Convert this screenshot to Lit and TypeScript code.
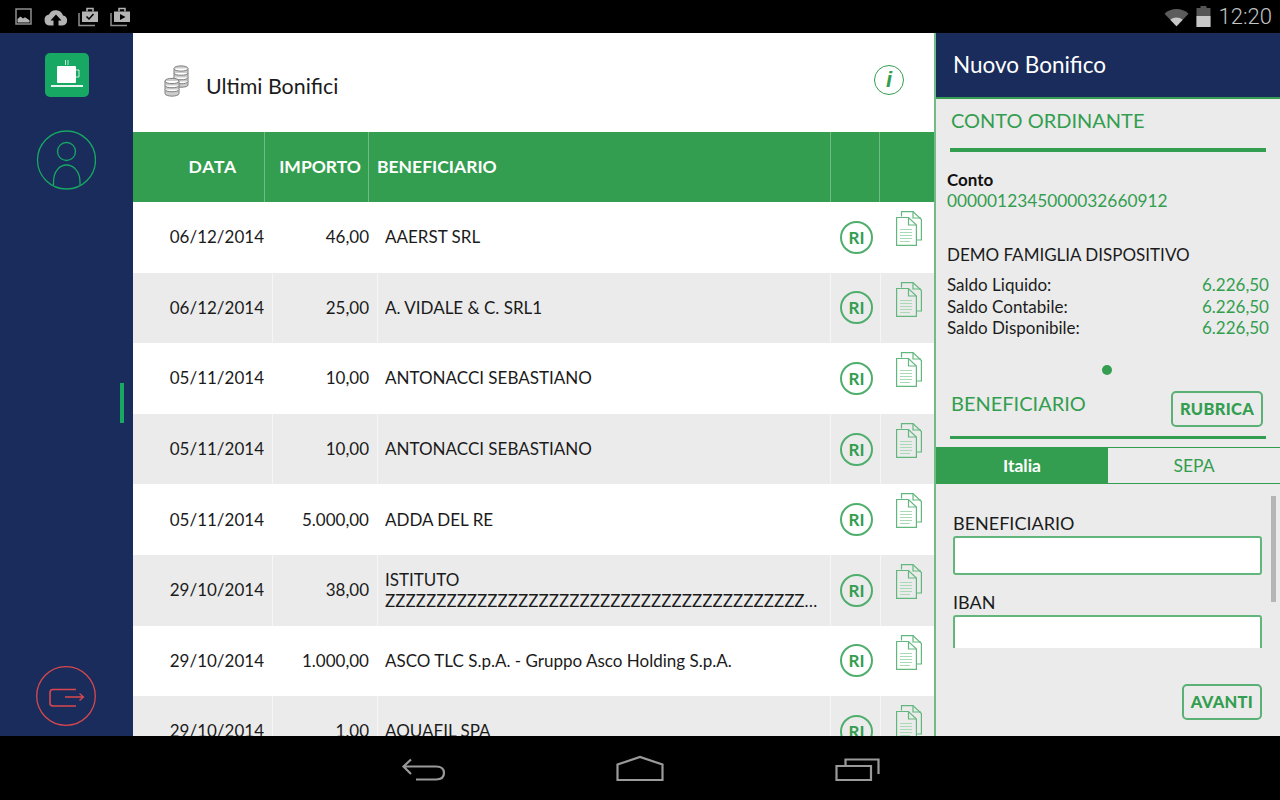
import { LitElement, html, css } from "lit";
import { customElement } from "lit/decorators.js";

const rows: [string, string, string][] = [
  ["06/12/2014", "46,00", "AAERST SRL"],
  ["06/12/2014", "25,00", "A. VIDALE & C. SRL1"],
  ["05/11/2014", "10,00", "ANTONACCI SEBASTIANO"],
  ["05/11/2014", "10,00", "ANTONACCI SEBASTIANO"],
  ["05/11/2014", "5.000,00", "ADDA DEL RE"],
  ["29/10/2014", "38,00", "ISTITUTO ZZZZZZZZZZZZZZZZZZZZZZZZZZZZZZZZZZZZZZZZZZZZZZZZZ"],
  ["29/10/2014", "1.000,00", "ASCO TLC S.p.A. - Gruppo Asco Holding S.p.A."],
  ["29/10/2014", "1,00", "AQUAFIL SPA"],
];

const docIcon = html`<svg class="doc" width="26" height="35" viewBox="0 0 26 35" fill="none" stroke="#62b77e" stroke-width="1.200">
  <path d="M5.500 5.500V.6H17L25.400 8.500V29H20.500" />
  <path d="M17 .6V7H25" />
  <path d="M.6 6.500H12.500L20.400 14V34.400H.6Z" />
  <path d="M12.500 6.500V14H20" />
  <path d="M4 18.500H16M4 21.500H16M4 24.500H16M4 27.500H16M4 30.500H14" stroke="#a9d9b7" />
</svg>`;

@customElement("app-root")
export class AppRoot extends LitElement {
  static styles = css`
    :host { display: block; width: 1280px; height: 800px; overflow: hidden; font-family: Lato, "Open Sans", sans-serif; color: #1b1b1b; background: #000; }
    .screen { display: flex; flex-direction: column; width: 1280px; height: 800px; }
    .status { height: 33px; flex: none; background: #000; display: flex; align-items: center; justify-content: space-between; padding: 0 8px 0 15px; color: #b4b4b4; }
    .status-left { display: flex; align-items: center; }
    .st-cloud { margin-left: 12px; margin-top: 1px; }
    .st-c1 { margin-left: 10px; }
    .st-c2 { margin-left: 11px; }
    .status-right { display: flex; align-items: center; gap: 7px; }
    .clock { font-family: Roboto, sans-serif; font-size: 22px; font-weight: 300; color: #c4c4c4; margin-left: 1px; }
    .body { flex: 1; min-height: 0; display: flex; }
    .side { width: 133px; flex: none; background: #1a2c5b; position: relative; display: flex; flex-direction: column; align-items: center; }
    .logo { margin: 20px 0 0 0; width: 44px; height: 44px; border-radius: 5px; background: #17a864; display: flex; align-items: center; justify-content: center; }
    .avatar { margin: 33px 0 0 -1px; display: block; }
    .logout { margin: auto 0 10px -1px; display: block; }
    .marker { position: absolute; left: 120px; top: 350px; width: 4px; height: 40px; background: #17a864; }
    .main { width: 801px; flex: none; background: #fff; display: flex; flex-direction: column; overflow: hidden; }
    .head { height: 99px; flex: none; display: flex; align-items: center; padding: 0 30px 0 31px; }
    .coins { margin-top: -3px; }
    .head h1 { margin: 6px 0 0 16px; font-size: 21.400px; font-weight: 400; color: #1b1b1b; flex: 1; }
    .info { width: 30px; height: 30px; box-sizing: border-box; border: 1px solid #339e4f; border-radius: 50%; color: #339e4f; font: italic 700 22px/28px "Liberation Sans", sans-serif; text-align: center; margin-top: -6px; }
    .thead { height: 70px; flex: none; display: grid; grid-template-columns: 132px 104px 462px 49px 54px; background: #339e4f; color: #fff; font-size: 17.500px; font-weight: 700; }
    .thead > div { display: flex; align-items: center; border-right: 1px solid #6fbb83; box-sizing: border-box; padding-bottom: 2px; }
    .thead > div:last-child { border-right: none; }
    .th-data { justify-content: flex-end; padding-right: 27px; letter-spacing: .8px; }
    .th-imp { justify-content: flex-end; padding-right: 7px; }
    .th-ben { padding-left: 8px; }
    .tr { height: 70.600px; flex: none; display: grid; grid-template-columns: 140px 105px 453px 50px 53px; align-items: stretch; font-size: 17px; background: #fff; }
    .tr.alt { background: #ebebeb; }
    .tr > div { display: flex; align-items: center; min-width: 0; box-sizing: border-box; padding-bottom: 1px; border-right: 1px solid rgba(255, 255, 255, .55); }
    .tr > div:last-child { border-right: none; }
    .td-date { justify-content: flex-end; padding-right: 8px; }
    .td-amt { justify-content: flex-end; padding-right: 8px; }
    .tr .td-ben { padding-left: 7px; padding-right: 8px; }
    .ben { line-height: 21px; width: 100%; display: -webkit-box; -webkit-box-orient: vertical; -webkit-line-clamp: 2; overflow: hidden; word-break: break-word; }
    .tr .td-ri { padding-left: 9px; }
    .ri { width: 33px; height: 33px; box-sizing: border-box; margin-top: 1px; border: 2px solid #4fae6b; border-radius: 50%; color: #339e4f; font-weight: 700; font-size: 17px; display: flex; align-items: center; justify-content: center; }
    .tr .td-doc { padding-left: 15px; align-items: flex-start; padding-top: 9px; }
    .doc { display: block; }
    .panel { flex: 1; min-width: 0; background: #ebebeb; border-left: 2px solid #72bb87; display: flex; flex-direction: column; box-sizing: border-box; position: relative; }
    .p-title { height: 66px; flex: none; box-sizing: border-box; background: #1a2c5b; border-bottom: 2px solid #339e4f; color: #fff; font-size: 22.500px; display: flex; align-items: center; padding: 0 0 2px 17px; }
    .sec { color: #339e4f; font-size: 20px; line-height: 24px; }
    .conto-h { padding: 9px 0 0 15px; }
    .rule { height: 4px; background: #339e4f; margin-left: 14px; width: 316px; }
    .rule.r1 { margin-top: 16px; }
    .info-block { padding: 17px 11px 0 11px; font-size: 17px; line-height: 21px; }
    .conto { font-weight: 700; color: #111; }
    .iban { color: #339e4f; font-size: 17.300px; }
    .holder { margin-top: 33px; }
    .saldo { display: flex; justify-content: space-between; line-height: 21.500px; }
    .saldo span:last-child { color: #339e4f; }
    .saldi { margin-top: 9px; }
    .dot { width: 10px; height: 10px; background: #339e4f; border-radius: 50%; margin: 26px 0 0 166px; }
    .ben-h { display: flex; align-items: flex-start; justify-content: space-between; padding: 16px 17px 0 15px; height: 60px; box-sizing: border-box; }
    .btn { box-sizing: border-box; border: 2px solid #5bb075; border-radius: 5px; color: #339e4f; font-weight: 900; font-size: 16.500px; display: flex; align-items: center; justify-content: center; letter-spacing: .3px; background: transparent; padding: 0; font-family: inherit; }
    .rub { width: 92px; height: 36px; }
    .rule.r2 { height: 3px; margin-top: 1px; }
    .tabs { display: grid; grid-template-columns: 172px 1fr; height: 37px; margin-top: 8px; border-top: 1px solid #339e4f; border-bottom: 1px solid #339e4f; box-sizing: border-box; font-size: 17.500px; text-align: center; }
    .tab { display: flex; align-items: center; justify-content: center; color: #339e4f; }
    .tab.on { background: #339e4f; color: #fff; font-weight: 700; }
    .form { height: 164px; overflow: hidden; padding: 29px 18px 0 17px; box-sizing: border-box; position: relative; flex: none; }
    .form label { display: block; font-size: 18px; line-height: 20px; color: #1b1b1b; }
    .inp { height: 39px; box-sizing: border-box; background: #fff; border: 2px solid #63b67b; border-radius: 3px; margin-top: 3px; margin-bottom: 17.500px; }
    .scroll { position: absolute; right: 4px; top: 12px; width: 5px; height: 106px; background: #b5b5b5; }
    .foot { flex: 1; display: flex; justify-content: flex-end; padding: 36px 18px 0 0; }
    .av { width: 80px; height: 36px; }
    .nav { height: 64px; flex: none; background: #000; display: flex; align-items: flex-start; justify-content: center; }
    .nav svg { display: block; }
  `;

  render() {
    return html`<div class="screen">
      <div class="status">
        <div class="status-left">
          <svg width="17" height="17" viewBox="0 0 17 17" fill="none"><rect x="1" y="1" width="15" height="15" stroke="#8f8f8f" stroke-width="1.500"/><path d="M2.500 14.500V11l3-2.500 2.500 2 2-1.200 4.500 3v2.200Z" fill="#b4b4b4"/></svg>
          <svg class="st-cloud" width="24" height="17" viewBox="0 0 24 17"><path d="M6 16.500A5.500 5.500 0 0 1 5 5.600 7.500 7.500 0 0 1 19 6.600 5 5 0 0 1 18.500 16.500H14.500V11.500H17.500L12 5.500 6.500 11.500H9.500V16.500Z" fill="#b4b4b4"/></svg>
          <svg class="st-c1" width="21" height="20" viewBox="0 0 21 20" fill="none"><path d="M1 6v12.500h16" stroke="#8f8f8f" stroke-width="1.500"/><path d="M4 4.500h16V15H4Z" fill="#b4b4b4"/><path d="M9 4.500V1.500h6V4.500" stroke="#b4b4b4" stroke-width="1.500"/><path d="M8.500 9.500l2.500 2.500 4.500-5" stroke="#000" stroke-width="1.500"/></svg>
          <svg class="st-c2" width="21" height="20" viewBox="0 0 21 20" fill="none"><path d="M1 6v12.500h16" stroke="#8f8f8f" stroke-width="1.500"/><path d="M4 4.500h16V15H4Z" fill="#b4b4b4"/><path d="M9 4.500V1.500h6V4.500" stroke="#b4b4b4" stroke-width="1.500"/><path d="M10 7l5.500 3L10 13Z" fill="#000"/></svg>
        </div>
        <div class="status-right">
          <svg width="25" height="20" viewBox="0 0 26 20"><path d="M0.500 6.500A19 19 0 0 1 25.500 6.500L13 19.500Z" fill="#5c5c5c"/><path d="M6.500 12.800A10 10 0 0 1 19.500 12.800L13 19.500Z" fill="#c8c8c8"/></svg>
          <svg width="15" height="21" viewBox="0 0 15 21"><path d="M4.500 0h6v2h4v19H.5V2h4Z" fill="#555"/><rect x=".5" y="10" width="14" height="11" fill="#c8c8c8"/></svg>
          <span class="clock">12:20</span>
        </div>
      </div>
      <div class="body">
        <div class="side">
          <div class="logo">
            <svg width="34" height="34" viewBox="0 0 34 34" fill="none">
              <path d="M15.500 2v5M18 2v5" stroke="#bfe6d2" stroke-width="1"/>
              <rect x="7" y="8" width="19" height="17" rx="1" fill="#fff"/>
              <path d="M26 12h3v7h-3" stroke="#cdeedd" stroke-width="1"/>
              <path d="M1 28h32" stroke="#fff" stroke-width="1.800"/>
            </svg>
          </div>
          <svg class="avatar" width="60" height="60" viewBox="0 0 60 60" fill="none" stroke="#17a864" stroke-width="1.300">
            <circle cx="30.500" cy="30" r="29"/>
            <circle cx="30.500" cy="21.500" r="9"/>
            <path d="M17.500 55V52C17.500 41 24 35 30.500 35S44 41 44 52V55"/>
          </svg>
          <svg class="logout" width="60" height="60" viewBox="0 0 60 60" fill="none" stroke="#d9484e" stroke-width="1.300">
            <circle cx="30" cy="30" r="29.300"/>
            <path d="M40 23.500H17Q14 23.500 14 26.500V37Q14 40 17 40H40" stroke-width="1.600"/>
            <path d="M29 31H47.500M43.500 27.500L47.500 31 43.500 34.500" stroke-width="1.300"/>
          </svg>
          <div class="marker"></div>
        </div>
        <div class="main">
          <div class="head">
            <svg class="coins" width="26" height="34" viewBox="0 0 26 34" fill="#fff" stroke="#808080" stroke-width="1">
              <path d="M10 4.500C10 1 24 1 24 4.500V21C24 24 10 24 10 21Z" fill="#ccc"/>
              <path d="M10 4.500C10 8 24 8 24 4.500M10 9C10 12 24 12 24 9M10 13.500C10 16.500 24 16.500 24 13.500M10 17.500C10 20.500 24 20.500 24 17.500"/>
              <path d="M1 17C1 13.500 15 13.500 15 17V29.500C15 33 1 33 1 29.500Z" fill="#ccc"/>
              <path d="M1 17C1 20.500 15 20.500 15 17M1 21.500C1 24.500 15 24.500 15 21.500M1 25.500C1 28.500 15 28.500 15 25.500" />
            </svg>
            <h1>Ultimi Bonifici</h1>
            <div class="info">i</div>
          </div>
          <div class="thead">
            <div class="th-data">DATA</div>
            <div class="th-imp">IMPORTO</div>
            <div class="th-ben">BENEFICIARIO</div>
            <div></div>
            <div></div>
          </div>
          ${rows.map((r, i) => html`<div class="tr ${i % 2 ? "alt" : ""}">
            <div class="td-date">${r[0]}</div>
            <div class="td-amt">${r[1]}</div>
            <div class="td-ben"><span class="ben">${r[2]}</span></div>
            <div class="td-ri"><div class="ri">RI</div></div>
            <div class="td-doc">${docIcon}</div>
          </div>`)}
        </div>
        <div class="panel">
          <div class="p-title">Nuovo Bonifico</div>
          <div class="sec conto-h">CONTO ORDINANTE</div>
          <div class="rule r1"></div>
          <div class="info-block">
            <div class="conto">Conto</div>
            <div class="iban">0000012345000032660912</div>
            <div class="holder">DEMO FAMIGLIA DISPOSITIVO</div>
            <div class="saldi">
              <div class="saldo"><span>Saldo Liquido:</span><span>6.226,50</span></div>
              <div class="saldo"><span>Saldo Contabile:</span><span>6.226,50</span></div>
              <div class="saldo"><span>Saldo Disponibile:</span><span>6.226,50</span></div>
            </div>
          </div>
          <div class="dot"></div>
          <div class="ben-h"><span class="sec">BENEFICIARIO</span><button class="btn rub">RUBRICA</button></div>
          <div class="rule r2"></div>
          <div class="tabs"><div class="tab on">Italia</div><div class="tab">SEPA</div></div>
          <div class="form">
            <label>BENEFICIARIO</label>
            <div class="inp"></div>
            <label>IBAN</label>
            <div class="inp"></div>
            <div class="scroll"></div>
          </div>
          <div class="foot"><button class="btn av">AVANTI</button></div>
        </div>
      </div>
      <div class="nav">
        <svg width="480" height="64" viewBox="0 0 480 64" fill="none" stroke="#9a9a9a" stroke-width="2.200">
          <path d="M11 23.500L3.500 30.500 11 38M3.500 30.500H36Q44 30.500 44 37 44 43.500 36 43.500H16"/>
          <path d="M217.500 44V28.500L240 21 262.500 28.500V44Z"/>
          <path d="M436.500 30H471V44H436.500ZM445.500 29V23.500H478.500V38"/>
        </svg>
      </div>
    </div>`;
  }
}
